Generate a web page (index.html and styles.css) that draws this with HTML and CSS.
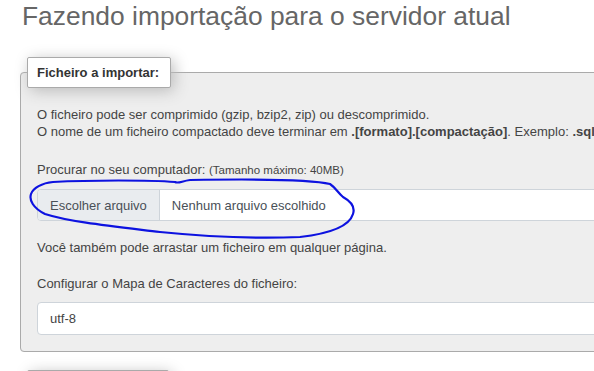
FILE: index.html
```html
<!DOCTYPE html>
<html lang="pt">
<head>
<meta charset="utf-8">
<title>Importar</title>
<link rel="stylesheet" href="styles.css">
</head>
<body>
<div class="page">
  <h2 class="title">Fazendo importação para o servidor atual</h2>
  <fieldset class="box">
    <legend class="box-legend">Ficheiro a importar:</legend>
    <p class="text">O ficheiro pode ser comprimido (gzip, bzip2, zip) ou descomprimido.<br>O nome de um ficheiro compactado deve terminar em <b>.[formato].[compactação]</b>. Exemplo: <b>.sql.zip</b></p>
    <p class="text gap-top">Procurar no seu computador: <span class="small">(Tamanho máximo: 40MB)</span></p>
    <div class="file-input">
      <span class="file-btn">Escolher arquivo</span>
      <span class="file-name">Nenhum arquivo escolhido</span>
    </div>
    <p class="text drag">Você também pode arrastar um ficheiro em qualquer página.</p>
    <p class="text charset-label">Configurar o Mapa de Caracteres do ficheiro:</p>
    <div class="select">utf-8</div>
  </fieldset>
  <fieldset class="box next">
    <legend class="box-legend">Importação parcial:</legend>
  </fieldset>
  <svg class="scribble" width="594" height="371" viewBox="0 0 594 371">
    <path d="M 53 182 C 90 180 150 180 175 182 C 178 184 182 181 190 180 C 250 179 310 179 330 184 C 336 188 338 193 343 197 C 352 202 355 208 353 214 C 350 224 335 233 300 237 C 250 239 200 236 160 232 C 110 226 70 222 45 214 C 33 208 29 200 31 194 C 33 188 42 183 53 182 Z" fill="none" stroke="#0d12e0" stroke-width="2.2" stroke-linecap="round" stroke-linejoin="round"/>
  </svg>
</div>
</body>
</html>
```

FILE: styles.css
```css
html, body {
  margin: 0;
  padding: 0;
  overflow: hidden;
  background: #fff;
}

.page {
  position: relative;
  width: 594px;
  height: 371px;
  overflow: hidden;
  font-family: "Liberation Sans", Arial, sans-serif;
  color: #444;
}

.title {
  margin: 0 0 0 22px;
  font-size: 26.4px;
  line-height: 32px;
  font-weight: normal;
  color: #666;
  white-space: nowrap;
}

.box {
  margin: 25px 0 0 20px;
  width: 720px;
  padding: 18px 16px 16px 16px;
  border: 1px solid #aaa;
  border-radius: 4px;
  background: #eee;
  box-sizing: border-box;
}

.box-legend {
  margin-left: -10px;
  padding: 7px 11px 7px 9px;
  line-height: 15px;
  font-size: 13px;
  font-weight: bold;
  color: #333;
  background: #fff;
  border: 1px solid #aaa;
  border-radius: 2px;
  box-shadow: 3px 3px 15px #bbb;
}

.text {
  margin: 0;
  font-size: 13px;
  line-height: 17px;
  white-space: nowrap;
}

.gap-top {
  margin-top: 21px;
}

.small {
  font-size: 11.5px;
}

.file-input {
  display: flex;
  margin-top: 10px;
  height: 32px;
  box-sizing: border-box;
  border: 1px solid #ced4da;
  border-radius: 4px;
  background: #fff;
  font-size: 13px;
  color: #495057;
  overflow: hidden;
}

.file-btn {
  display: flex;
  align-items: center;
  padding: 0 12px;
  background: #e9ecef;
  border-right: 1px solid #ced4da;
}

.file-name {
  display: flex;
  align-items: center;
  padding: 0 12px;
}

.drag {
  margin-top: 18px;
}

.charset-label {
  margin-top: 19px;
}

.select {
  display: flex;
  align-items: center;
  margin-top: 10px;
  height: 33px;
  box-sizing: border-box;
  padding: 0 12px;
  border: 1px solid #ced4da;
  border-radius: 4px;
  background: #fff;
  font-size: 13px;
  color: #444;
}

.next {
  margin-top: 18px;
  height: 80px;
}

.scribble {
  position: absolute;
  left: 0;
  top: 0;
  pointer-events: none;
}
```
